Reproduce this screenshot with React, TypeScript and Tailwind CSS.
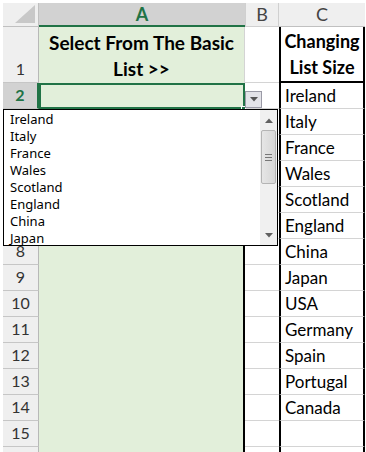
import React from "react";

const countries = [
  "Ireland",
  "Italy",
  "France",
  "Wales",
  "Scotland",
  "England",
  "China",
  "Japan",
  "USA",
  "Germany",
  "Spain",
  "Portugal",
  "Canada",
];

const font = { fontFamily: 'Lato, "Open Sans", "Liberation Sans", sans-serif' };

const RowHead = ({ n, active }: { n: number; active?: boolean }) => (
  <div
    className={`w-[36px] shrink-0 flex items-end justify-center pb-[1px] text-[16px] border-b border-[#c6c6c6] ${
      active
        ? "bg-[#d2d2d2] text-[#217346] font-bold border-r-2 border-r-[#217346]"
        : "bg-[#efefef] text-[#333] border-r border-r-[#b8b8b8]"
    }`}
  >
    {n}
  </div>
);

export default function App() {
  const rows = Array.from({ length: 15 }, (_, i) => i + 2);

  return (
    <div className="relative w-[366px] h-[452px] overflow-hidden bg-white pt-[3px] pl-[3px]" style={font}>
      {/* column headers */}
      <div className="flex h-[24px]">
        <div className="w-[36px] shrink-0 bg-[#efefef] border-r border-b border-[#c0c0c0] relative overflow-hidden">
          <div className="absolute right-[3px] bottom-[3px] w-0 h-0 border-l-[20px] border-l-transparent border-b-[18px] border-b-[#c8c8c8]" />
        </div>
        <div className="w-[206px] shrink-0 bg-[#d2d2d2] border-b-2 border-[#217346] flex items-center justify-center text-[18px] font-bold text-[#217346]">
          A
        </div>
        <div className="w-[34px] shrink-0 bg-[#efefef] border-l border-r border-b border-[#d0d0d0] flex items-center justify-center text-[18px] text-[#444]">
          B
        </div>
        <div className="w-[86px] shrink-0 bg-[#efefef] border-b border-[#c0c0c0] flex items-center justify-center text-[18px] text-[#444]">
          C
        </div>
      </div>

      {/* row 1 */}
      <div className="flex h-[56px]">
        <RowHead n={1} />
        <div className="w-[206px] shrink-0 bg-[#e2efda] border-r border-[#d4d4d4] flex items-end justify-center text-center text-[19px] font-bold leading-[26px] text-black pb-[1px]">
          Select From The Basic
          <br />
          List &gt;&gt;
        </div>
        <div className="w-[34px] shrink-0 border-b border-[#d4d4d4]" />
        <div className="w-[86px] shrink-0 border-x-2 border-b-2 border-black flex items-end justify-center text-center text-[18px] font-bold leading-[26px] text-black pb-[1px]">
          Changing
          <br />
          List Size
        </div>
      </div>

      {/* rows 2..16 */}
      {rows.map((r) => (
        <div key={r} className="flex h-[26px]">
          <RowHead n={r} active={r === 2} />
          <div
            className={`w-[206px] shrink-0 bg-[#e2efda] ${
              r === 2 ? "border-2 border-[#217346]" : "border-r-2 border-black"
            }`}
          />
          <div className="w-[34px] shrink-0 border-b border-[#d4d4d4]" />
          <div className="w-[86px] shrink-0 border-x-2 border-black border-b border-b-[#d4d4d4] flex items-end pl-[4px] text-[17px] leading-[24px] text-black">
            {countries[r - 2] ?? ""}
          </div>
        </div>
      ))}

      {/* fill handle */}
      <div className="absolute left-[241px] top-[106px] w-[5px] h-[5px] bg-[#217346] border border-white" />

      {/* dropdown button */}
      <div className="absolute left-[245px] top-[91px] w-[17px] h-[17px] bg-[#e3e3e8] border border-[#9a9aa6] flex items-center justify-center">
        <svg width="8" height="5" viewBox="0 0 8 5">
          <path d="M0 0H8L4 4.5Z" fill="#555" />
        </svg>
      </div>

      {/* dropdown list */}
      <div
        className="absolute left-[3px] top-[109px] w-[275px] h-[137px] bg-white border border-black flex"
        style={{ fontFamily: '"Noto Sans", "Open Sans", sans-serif' }}
      >
        <div className="flex-1 pl-[6px] pt-[1px] flex flex-col">
          {countries.slice(0, 8).map((c) => (
            <div key={c} className="h-[17px] leading-[17px] text-[13px] text-black">
              {c}
            </div>
          ))}
        </div>
        <div className="w-[17px] shrink-0 bg-[#f0f0f0] flex flex-col items-center">
          <div className="h-[20px] flex items-center justify-center">
            <svg width="8" height="5" viewBox="0 0 8 5">
              <path d="M4 0.5L8 5H0Z" fill="#606060" />
            </svg>
          </div>
          <div className="w-[15px] h-[54px] rounded-[2px] bg-gradient-to-r from-[#e6e6e6] to-[#d6d6d6] border border-[#b4b4b4] flex flex-col items-center justify-center gap-[2px]">
            <div className="w-[7px] h-[1px] bg-[#777]" />
            <div className="w-[7px] h-[1px] bg-[#777]" />
            <div className="w-[7px] h-[1px] bg-[#777]" />
          </div>
          <div className="flex-1" />
          <div className="h-[20px] flex items-center justify-center">
            <svg width="8" height="5" viewBox="0 0 8 5">
              <path d="M0 0H8L4 4.5Z" fill="#606060" />
            </svg>
          </div>
        </div>
      </div>
    </div>
  );
}
